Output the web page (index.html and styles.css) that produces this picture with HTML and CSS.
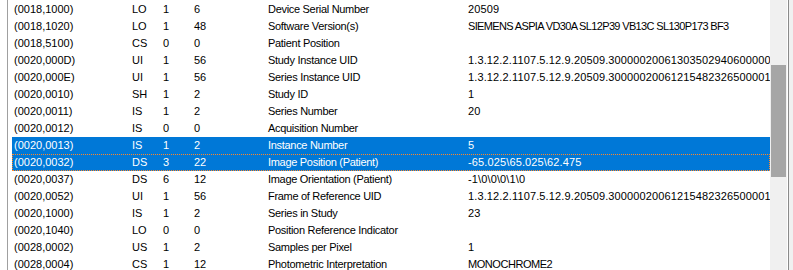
FILE: index.html
```html
<!DOCTYPE html>
<html>
<head>
<meta charset="utf-8">
<link rel="stylesheet" href="styles.css">
</head>
<body>
<div class="frame">
  <div class="gutter"></div>
  <div class="listview">
    <div class="list">
      <div class="row"><span>(0018,1000)</span><span>LO</span><span>1</span><span>6</span><span class="desc">Device Serial Number</span><span class="val num">20509</span></div>
      <div class="row"><span>(0018,1020)</span><span>LO</span><span>1</span><span>48</span><span class="desc">Software Version(s)</span><span class="val txt tight">SIEMENS ASPIA VD30A SL12P39 VB13C SL130P173 BF3</span></div>
      <div class="row"><span>(0018,5100)</span><span>CS</span><span>0</span><span>0</span><span class="desc">Patient Position</span><span class="val"></span></div>
      <div class="row"><span>(0020,000D)</span><span>UI</span><span>1</span><span>56</span><span class="desc">Study Instance UID</span><span class="val num">1.3.12.2.1107.5.12.9.20509.3000002006130350294060000000</span></div>
      <div class="row"><span>(0020,000E)</span><span>UI</span><span>1</span><span>56</span><span class="desc">Series Instance UID</span><span class="val num">1.3.12.2.1107.5.12.9.20509.3000002006121548232650000123</span></div>
      <div class="row"><span>(0020,0010)</span><span>SH</span><span>1</span><span>2</span><span class="desc">Study ID</span><span class="val num">1</span></div>
      <div class="row"><span>(0020,0011)</span><span>IS</span><span>1</span><span>2</span><span class="desc">Series Number</span><span class="val num">20</span></div>
      <div class="row"><span>(0020,0012)</span><span>IS</span><span>0</span><span>0</span><span class="desc">Acquisition Number</span><span class="val"></span></div>
      <div class="row selected"><span>(0020,0013)</span><span>IS</span><span>1</span><span>2</span><span class="desc">Instance Number</span><span class="val num">5</span></div>
      <div class="row selected focused"><span>(0020,0032)</span><span>DS</span><span>3</span><span>22</span><span class="desc">Image Position (Patient)</span><span class="val num">-65.025\65.025\62.475</span></div>
      <div class="row"><span>(0020,0037)</span><span>DS</span><span>6</span><span>12</span><span class="desc">Image Orientation (Patient)</span><span class="val num">-1\0\0\0\1\0</span></div>
      <div class="row"><span>(0020,0052)</span><span>UI</span><span>1</span><span>56</span><span class="desc">Frame of Reference UID</span><span class="val num">1.3.12.2.1107.5.12.9.20509.3000002006121548232650000123</span></div>
      <div class="row"><span>(0020,1000)</span><span>IS</span><span>1</span><span>2</span><span class="desc">Series in Study</span><span class="val num">23</span></div>
      <div class="row"><span>(0020,1040)</span><span>LO</span><span>0</span><span>0</span><span class="desc">Position Reference Indicator</span><span class="val"></span></div>
      <div class="row"><span>(0028,0002)</span><span>US</span><span>1</span><span>2</span><span class="desc">Samples per Pixel</span><span class="val num">1</span></div>
      <div class="row"><span>(0028,0004)</span><span>CS</span><span>1</span><span>12</span><span class="desc">Photometric Interpretation</span><span class="val txt">MONOCHROME2</span></div>
    </div>
    <div class="scrollbar"><div class="thumb"></div></div>
    <div class="edge"></div>
  </div>
</div>
</body>
</html>
```
FILE: styles.css
```css
html, body {
  margin: 0;
  padding: 0;
  height: 270px;
  overflow: hidden;
  background: #f0f0f0;
}
.frame {
  display: flex;
  height: 270px;
  font-family: "Liberation Sans", Arial, sans-serif;
  font-size: 11px;
  color: #000;
}
.gutter {
  width: 7px;
  background: #fff;
}
.listview {
  display: flex;
  width: 780px;
  background: #fff;
  border-left: 1px solid #a0a0a0;
  border-right: 1px solid #8a8a8a;
}
.list {
  width: 758px;
  padding-left: 4px;
  padding-top: 1px;
  overflow: hidden;
}
.row {
  display: grid;
  grid-template-columns: 118px 31px 31px 74px 200px minmax(0, 1fr);
  width: 758px;
  height: 17px;
  line-height: 17px;
  white-space: nowrap;
}
.row span {
  padding-left: 2px;
  overflow: visible;
}
.row .desc {
  letter-spacing: -0.3px;
  overflow: hidden;
}
.row .val.num {
  letter-spacing: 0.13px;
}
.row .val.txt {
  letter-spacing: -0.45px;
}
.row .val.txt.tight {
  letter-spacing: -0.65px;
}
.row.selected {
  background: #0078d7;
  color: #fff;
}
.row.focused {
  outline: 1px dotted #ff8728;
  outline-offset: -1px;
}
.scrollbar {
  width: 17px;
  background: #f0f0f0;
  padding-top: 65px;
  box-sizing: border-box;
}
.thumb {
  margin-left: 1px;
  width: 15px;
  height: 112px;
  background: #a6a6a6;
}
.edge {
  width: 1px;
  background: #fff;
}
```
